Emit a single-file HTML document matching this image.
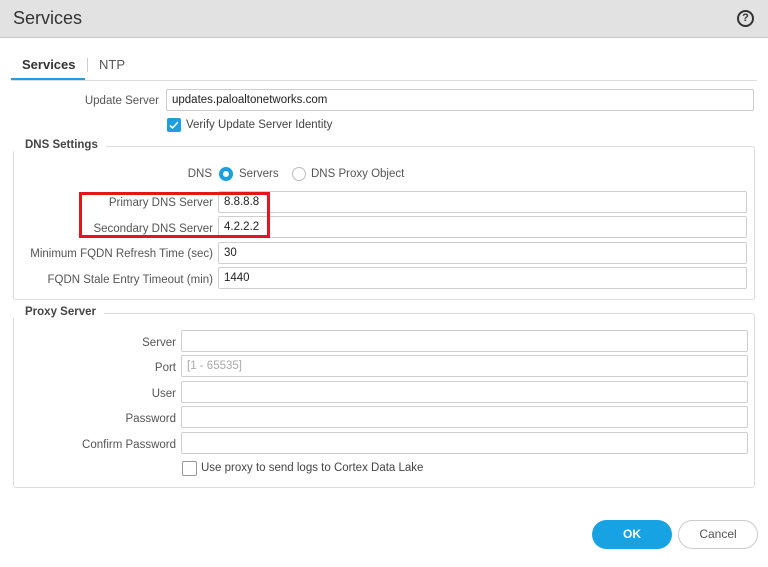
<!DOCTYPE html>
<html><head><meta charset="utf-8"><style>
*{box-sizing:border-box;margin:0;padding:0}
body{width:768px;height:567px;position:relative;background:#fff;font-family:"Liberation Sans",sans-serif;color:#333;overflow:hidden;font-size:11.5px}
.a{position:absolute}
.hdr{left:0;top:0;width:768px;height:38px;background:#e2e2e2;border-bottom:1px solid #c8c8c8}
.lbl{color:#555;text-align:right;white-space:nowrap;line-height:14px;margin-top:2px}
.in{border:1px solid #cfcfcf;border-radius:2px;height:22px;line-height:20px;padding-left:5px;color:#222;font-size:11.5px}
.fs{border:1px solid #ddd;border-radius:3px}
.leg{background:#fff;padding:0 8px 0 12px;font-weight:bold;color:#444;font-size:11.5px}
.radio{width:14px;height:14px;border-radius:50%;border:1px solid #bbb;background:#fff}
</style></head><body>
<div class="a hdr"></div>
<div class="a" style="left:13px;top:8px;font-size:18px;color:#333">Services</div>
<div class="a" style="left:737px;top:10px;width:17px;height:17px;border:2px solid #333;border-radius:50%;text-align:center;font-weight:bold;font-size:11px;line-height:13px;color:#333">?</div>

<div class="a" style="left:22px;top:57px;font-weight:bold;font-size:13px;color:#333">Services</div>
<div class="a" style="left:87px;top:58px;width:1px;height:14px;background:#ccc"></div>
<div class="a" style="left:99px;top:57px;font-size:13px;color:#555">NTP</div>
<div class="a" style="left:11px;top:80px;width:746px;height:1px;background:#ddd"></div>
<div class="a" style="left:11px;top:78px;width:74px;height:2px;background:#1b9fe0"></div>

<div class="a lbl" style="right:609px;top:92px">Update Server</div>
<div class="a in" style="left:166px;top:89px;width:588px">updates.paloaltonetworks.com</div>
<div class="a" style="left:167px;top:118px;width:14px;height:14px;background:#1b9fe0;border-radius:2px"><svg width="14" height="14" viewBox="0 0 14 14"><path d="M3 7.5l2.5 2.5L11 4" stroke="#fff" stroke-width="1.6" fill="none"/></svg></div>
<div class="a" style="left:186px;top:119px;color:#444">Verify Update Server Identity</div>

<div class="a fs" style="left:13px;top:146px;width:742px;height:154px"></div>
<div class="a leg" style="left:13px;top:139px">DNS Settings</div>
<div class="a lbl" style="right:556px;top:165px">DNS</div>
<div class="a radio" style="left:219px;top:167px;border:4px solid #1b9fe0"></div>
<div class="a" style="left:239px;top:168px;color:#555">Servers</div>
<div class="a radio" style="left:292px;top:167px"></div>
<div class="a" style="left:311px;top:168px;color:#555">DNS Proxy Object</div>

<div class="a lbl" style="right:555px;top:194px">Primary DNS Server</div>
<div class="a in" style="left:218px;top:191px;width:529px">8.8.8.8</div>
<div class="a lbl" style="right:555px;top:220px">Secondary DNS Server</div>
<div class="a in" style="left:218px;top:216px;width:529px">4.2.2.2</div>
<div class="a lbl" style="right:555px;top:245px">Minimum FQDN Refresh Time (sec)</div>
<div class="a in" style="left:218px;top:242px;width:529px">30</div>
<div class="a lbl" style="right:555px;top:271px">FQDN Stale Entry Timeout (min)</div>
<div class="a in" style="left:218px;top:267px;width:529px">1440</div>
<div class="a" style="left:79px;top:192px;width:191px;height:46px;border:3px solid #e8141b"></div>

<div class="a fs" style="left:13px;top:313px;width:742px;height:175px"></div>
<div class="a leg" style="left:13px;top:306px">Proxy Server</div>
<div class="a lbl" style="right:592px;top:334px">Server</div>
<div class="a in" style="left:181px;top:330px;width:567px"></div>
<div class="a lbl" style="right:592px;top:359px">Port</div>
<div class="a in" style="left:181px;top:355px;width:567px;color:#aaa">[1 - 65535]</div>
<div class="a lbl" style="right:592px;top:385px">User</div>
<div class="a in" style="left:181px;top:381px;width:567px"></div>
<div class="a lbl" style="right:592px;top:410px">Password</div>
<div class="a in" style="left:181px;top:406px;width:567px"></div>
<div class="a lbl" style="right:592px;top:436px">Confirm Password</div>
<div class="a in" style="left:181px;top:432px;width:567px"></div>
<div class="a" style="left:182px;top:461px;width:15px;height:15px;border:1px solid #999;border-radius:2px"></div>
<div class="a" style="left:201px;top:462px;color:#444">Use proxy to send logs to Cortex Data Lake</div>

<div class="a" style="left:592px;top:520px;width:80px;height:29px;background:#17a2e4;border-radius:15px;color:#fff;font-weight:bold;text-align:center;line-height:29px;font-size:12px">OK</div>
<div class="a" style="left:678px;top:520px;width:80px;height:29px;border:1px solid #ccc;border-radius:15px;color:#555;text-align:center;line-height:27px;font-size:12px">Cancel</div>
</body></html>
